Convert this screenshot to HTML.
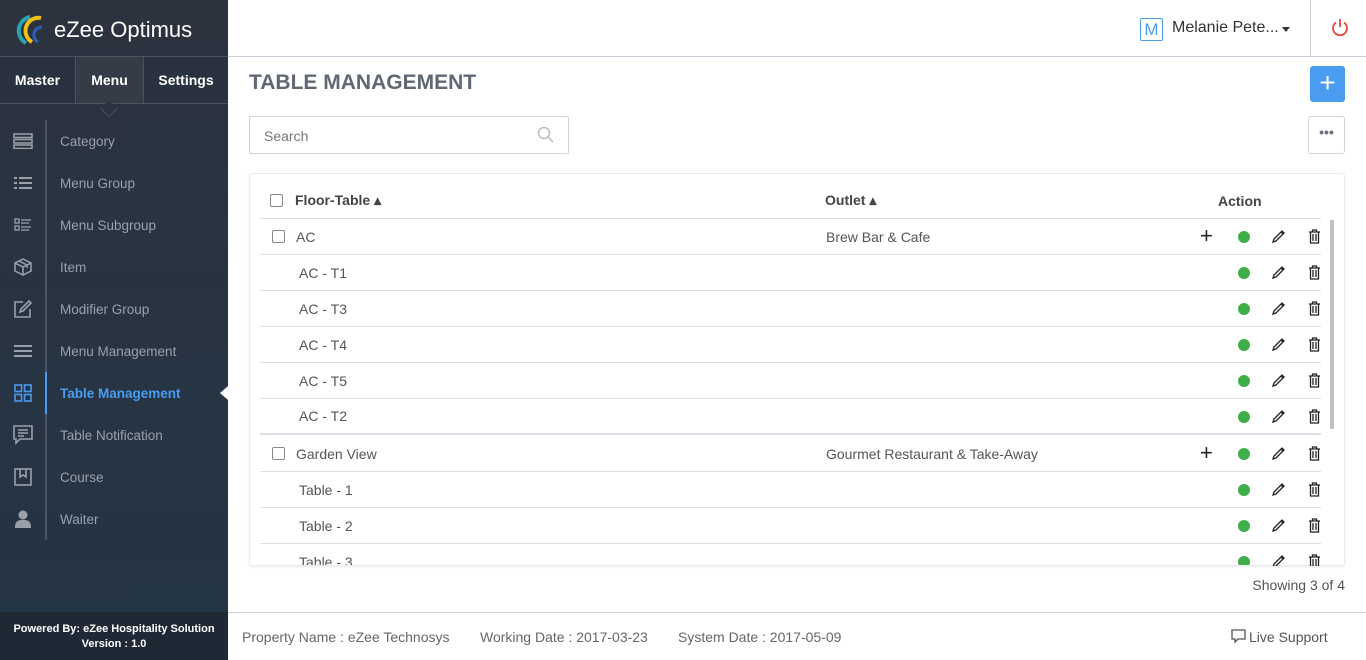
<!DOCTYPE html>
<html><head><meta charset="utf-8"><style>
*{box-sizing:border-box;margin:0;padding:0}
body{width:1366px;height:660px;overflow:hidden;font-family:"Liberation Sans",Arial,sans-serif;background:#fff;position:relative}
.sb{position:absolute;left:0;top:0;width:228px;height:660px;background:linear-gradient(#2c323e,#263444 70%,#233545)}
.logo{position:absolute;left:14px;top:10px;height:40px;display:flex;align-items:center;color:#fff;font-size:22px}
.tabs{position:absolute;top:56px;left:0;width:228px;height:48px;border-top:1px solid #4a5260;border-bottom:1px solid #4a5260;display:flex;color:#fff;font-weight:bold;font-size:14px}
.tabs div{display:flex;align-items:center;justify-content:center}
.nav{position:absolute;left:0;top:120px;width:228px}
.nav .it{height:42px;display:flex;align-items:center;color:#9aa1ab;font-size:13.5px;position:relative}
.nav .ic{width:45px;display:flex;justify-content:center;color:#9aa1ab}
.nav .tx{padding-left:15px}
.vl{position:absolute;left:45px;top:120px;width:2px;height:420px;background:#4b5462}
.sbf{position:absolute;left:0;top:612px;width:228px;height:48px;background:#1f2935;color:#fff;font-size:11px;text-align:center;padding-top:10px;line-height:15px;font-weight:600}
.top{position:absolute;left:228px;top:0;right:0;height:57px;border-bottom:1px solid #c9d2dc}
.abs{position:absolute}
.card{position:absolute;left:249px;top:173px;width:1096px;height:393px;border:1px solid #e8ecf0;border-radius:3px;box-shadow:0 1px 2px rgba(0,0,0,.08);overflow:hidden}
.row{position:absolute;left:10px;width:1061px;height:36px;border-bottom:1px solid #d9e0e8;font-size:14px;color:#555;display:flex;align-items:center}
.cb{width:13px;height:13px;border:1.5px solid #888;border-radius:2px;display:inline-block}
.dot{position:absolute;left:978px;width:12px;height:12px;border-radius:50%;background:#3fae49}
.foot{position:absolute;left:228px;top:612px;right:0;height:48px;border-top:1px solid #c9d2dc;font-size:14px;color:#666}
</style></head><body>
<div class="sb">
 <div class="logo"><svg width="34" height="34" viewBox="0 0 34 34"><path d="M16 4 A14 14 0 0 0 12 30" stroke="#2aa3b0" stroke-width="4" fill="none"/><path d="M27 5 A13 13 0 0 0 18 29" stroke="#f2c01a" stroke-width="4" fill="none"/><path d="M28 14 A8 8 0 0 0 24 29" stroke="#2a5fbf" stroke-width="3" fill="none"/></svg><span style="margin-left:6px">eZee Optimus</span></div>
 <div class="tabs"><div style="width:75px">Master</div><div style="width:69px;background:#353c48;border-left:1px solid #4a5260;border-right:1px solid #4a5260">Menu</div><div style="width:84px">Settings</div></div>
 <div class="abs" style="left:103px;top:103px;width:12px;height:12px;background:#2b3240;border-right:1px solid #4a5260;border-bottom:1px solid #4a5260;transform:rotate(45deg)"></div>
 <div class="vl"></div>
 <div class="nav">
  <div class="it"><span class="ic"><svg width="20" height="16"><g fill="none" stroke="#9aa1ab" stroke-width="1.5"><rect x="1" y="1" width="18" height="3.5"/><rect x="1" y="6.5" width="18" height="3.5"/><rect x="1" y="12" width="18" height="3.5"/></g></svg></span><span class="tx">Category</span></div>
  <div class="it"><span class="ic"><svg width="18" height="14" fill="#9aa1ab"><rect x="0" y="1" width="3" height="2"/><rect x="5" y="1" width="13" height="2"/><rect x="0" y="6" width="3" height="2"/><rect x="5" y="6" width="13" height="2"/><rect x="0" y="11" width="3" height="2"/><rect x="5" y="11" width="13" height="2"/></svg></span><span class="tx">Menu Group</span></div>
  <div class="it"><span class="ic"><svg width="18" height="14" fill="none" stroke="#9aa1ab" stroke-width="1.3"><rect x="1" y="1" width="4" height="4"/><rect x="1" y="8" width="4" height="4"/><path d="M7 2h10M7 5h8M7 9h10M7 12h8"/></svg></span><span class="tx">Menu Subgroup</span></div>
  <div class="it"><span class="ic"><svg width="18" height="18" fill="none" stroke="#9aa1ab" stroke-width="1.5"><path d="M9 1L17 5V13L9 17L1 13V5Z M1 5L9 9L17 5 M9 9V17 M5 3L13 7V10"/></svg></span><span class="tx">Item</span></div>
  <div class="it"><span class="ic"><svg width="18" height="18" fill="none" stroke="#9aa1ab" stroke-width="1.6"><path d="M9 2H1V17H16V9"/><path d="M6 12L7 9L15 1L17 3L9 11Z"/></svg></span><span class="tx">Modifier Group</span></div>
  <div class="it"><span class="ic"><svg width="18" height="14" fill="#9aa1ab"><rect y="1" width="18" height="2"/><rect y="6" width="18" height="2"/><rect y="11" width="18" height="2"/></svg></span><span class="tx">Menu Management</span></div>
  <div class="it" style="color:#4a9cf0;font-weight:bold"><span class="ic"><svg width="18" height="18" fill="none" stroke="#4a9cf0" stroke-width="1.6"><rect x="1" y="1" width="6.5" height="6.5"/><rect x="10.5" y="1" width="6.5" height="6.5"/><rect x="1" y="10.5" width="6.5" height="6.5"/><rect x="10.5" y="10.5" width="6.5" height="6.5"/></svg></span><span class="tx">Table Management</span><div class="abs" style="left:45px;top:0;width:2px;height:42px;background:#4a9cf0"></div><div class="abs" style="left:220px;top:14px;border-right:8px solid #fff;border-top:7px solid transparent;border-bottom:7px solid transparent"></div></div>
  <div class="it"><span class="ic"><svg width="20" height="20" fill="none" stroke="#9aa1ab" stroke-width="1.6"><path d="M1 1H19V14H7L3 18V14H1Z M5 5H15M5 8H15M5 11H11"/></svg></span><span class="tx">Table Notification</span></div>
  <div class="it"><span class="ic"><svg width="18" height="18" fill="none" stroke="#9aa1ab" stroke-width="1.6"><rect x="1" y="1" width="16" height="16"/><path d="M6 1V9L9 7L12 9V1"/></svg></span><span class="tx">Course</span></div>
  <div class="it"><span class="ic"><svg width="16" height="18" fill="#9aa1ab"><circle cx="8" cy="5" r="4.5"/><path d="M0 18C0 11 3 10 8 10S16 11 16 18Z"/></svg></span><span class="tx">Waiter</span></div>
 </div>
 <div class="sbf">Powered By: eZee Hospitality Solution<br>Version : 1.0</div>
</div>
<div class="top">
 <div class="abs" style="left:912px;top:18px;width:23px;height:23px;border:1px solid #4a9cf0;border-radius:2px;color:#4a9cf0;font-size:17px;text-align:center;line-height:21px">M</div>
 <div class="abs" style="left:944px;top:19px;font-size:16px;color:#333">Melanie Pete...</div>
 <div class="abs" style="left:1054px;top:27px;border-top:5px solid #333;border-left:4px solid transparent;border-right:4px solid transparent"></div>
 <div class="abs" style="left:1082px;top:0;width:1px;height:57px;background:#ccd4dc"></div>
 <svg class="abs" style="left:1102px;top:18px" width="20" height="20" fill="none" stroke="#e8473d" stroke-width="1.8"><path d="M6 4.5A7 7 0 1 0 14 4.5"/><path d="M10 1V9"/></svg>
</div>
<div class="abs" style="left:249px;top:71px;font-size:21px;font-weight:bold;color:#5f6873">TABLE MANAGEMENT</div>
<div class="abs" style="left:1310px;top:66px;width:35px;height:36px;background:#4a9cf0;border-radius:3px;color:#fff;font-size:28px;text-align:center;line-height:34px;font-weight:300">+</div>
<div class="abs" style="left:1308px;top:116px;width:37px;height:38px;border:1px solid #ccd4dc;border-radius:3px;color:#6a7380;font-size:14px;text-align:center;line-height:30px;font-weight:bold">•••</div>
<div class="abs" style="left:249px;top:116px;width:320px;height:38px;border:1px solid #ccd4dc;border-radius:2px;font-size:14px;color:#777;padding:11px 14px">Search</div>
<svg class="abs" style="left:537px;top:126px" width="17" height="17" fill="none" stroke="#bbb" stroke-width="1.5"><circle cx="7" cy="7" r="5.5"/><path d="M11 11L16 16"/></svg>
<div class="card">
 <div class="row" style="top:9px;font-weight:bold;color:#444"><span class="cb" style="margin-left:10px"></span><span style="margin-left:12px">Floor-Table ▴</span><span class="abs" style="left:565px">Outlet ▴</span><span class="abs" style="left:958px">Action</span></div>
 <div class="abs" style="left:1080px;top:46px;width:4px;height:209px;background:#c1c1c1"></div>
 <div class="row" style="top:45px"><span class="cb" style="margin-left:12px"></span><span style="margin-left:11px">AC</span><span class="abs" style="left:566px">Brew Bar &amp; Cafe</span><span class="abs" style="left:940px;font-size:22px;color:#222;font-weight:300;top:4px">+</span><span class="dot" style="top:12px"></span></div>
 <div class="row" style="top:81px"><span style="margin-left:39px">AC - T1</span><span class="dot" style="top:12px"></span></div>
 <div class="row" style="top:117px"><span style="margin-left:39px">AC - T3</span><span class="dot" style="top:12px"></span></div>
 <div class="row" style="top:153px"><span style="margin-left:39px">AC - T4</span><span class="dot" style="top:12px"></span></div>
 <div class="row" style="top:189px"><span style="margin-left:39px">AC - T5</span><span class="dot" style="top:12px"></span></div>
 <div class="row" style="top:225px;border-bottom:2px solid #d9e0e8"><span style="margin-left:39px">AC - T2</span><span class="dot" style="top:12px"></span></div>
 <div class="row" style="top:262px"><span class="cb" style="margin-left:12px"></span><span style="margin-left:11px">Garden View</span><span class="abs" style="left:566px">Gourmet Restaurant &amp; Take-Away</span><span class="abs" style="left:940px;font-size:22px;color:#222;font-weight:300;top:4px">+</span><span class="dot" style="top:12px"></span></div>
 <div class="row" style="top:298px"><span style="margin-left:39px">Table - 1</span><span class="dot" style="top:12px"></span></div>
 <div class="row" style="top:334px"><span style="margin-left:39px">Table - 2</span><span class="dot" style="top:12px"></span></div>
 <div class="row" style="top:370px"><span style="margin-left:39px">Table - 3</span><span class="dot" style="top:12px"></span></div>
</div>
<svg class="abs" style="left:0;top:0;pointer-events:none" width="1366" height="566">
 <defs><g id="ac" fill="none" stroke="#222" stroke-width="1.3"><path d="M1 13L2 10L10 2L12 4L4 12Z M9 3L11 5"/><g transform="translate(36,0)"><path d="M1 3H12M4.5 3V1H8.5V3M2.5 3V14H10.5V3M5 5V12M8 5V12"/></g></g></defs>
 <use href="#ac" x="1272" y="229"/><use href="#ac" x="1272" y="265"/><use href="#ac" x="1272" y="301"/><use href="#ac" x="1272" y="337"/><use href="#ac" x="1272" y="373"/><use href="#ac" x="1272" y="409"/><use href="#ac" x="1272" y="446"/><use href="#ac" x="1272" y="482"/><use href="#ac" x="1272" y="518"/><use href="#ac" x="1272" y="554"/>
</svg>
<div class="abs" style="right:21px;top:577px;font-size:14px;color:#555">Showing 3 of 4</div>
<div class="foot">
 <span class="abs" style="left:14px;top:16px">Property Name : eZee Technosys</span>
 <span class="abs" style="left:252px;top:16px">Working Date : 2017-03-23</span>
 <span class="abs" style="left:450px;top:16px">System Date : 2017-05-09</span>
 <svg class="abs" style="left:1003px;top:16px" width="15" height="15" fill="none" stroke="#555" stroke-width="1.3"><path d="M1 1H14V10H7L4 13V10H1Z"/></svg>
 <span class="abs" style="left:1021px;top:16px;color:#555">Live Support</span>
</div>
</body></html>
